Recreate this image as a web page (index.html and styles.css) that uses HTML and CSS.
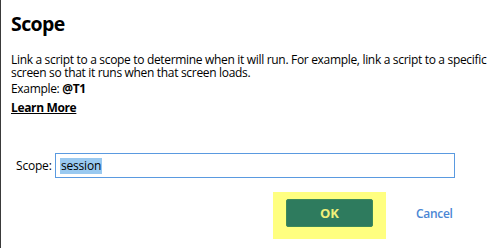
FILE: index.html
```html
<!DOCTYPE html>
<html>
<head>
<meta charset="utf-8">
<link rel="stylesheet" href="styles.css">
</head>
<body>
<div class="dialog">
  <h1 class="title">Scope</h1>
  <p class="desc">Link a script to a scope to determine when it will run. For example, link a script to a specific screen so that it runs when that screen loads.</p>
  <p class="example">Example: <b>@T1</b></p>
  <a class="learn" href="#">Learn More</a>
  <div class="field">
    <label class="label">Scope:</label>
    <div class="input"><span class="sel">session</span></div>
  </div>
  <div class="actions">
    <div class="hl"><button class="ok">OK</button></div>
    <a class="cancel" href="#">Cancel</a>
  </div>
</div>
</body>
</html>
```
FILE: styles.css
```css
html, body { margin: 0; padding: 0; background: #fff; }
body { font-family: "Open Sans", "Noto Sans", sans-serif; color: #000; }
.dialog {
  width: 499px; height: 248px; box-sizing: border-box;
  border-left: 1px solid #3a3a3a;
  padding: 10px 0 0 10px;
}
.title { margin: 0; font-size: 19.5px; font-weight: 700; line-height: 28px; letter-spacing: -0.6px; }
.desc { margin: 15px 0 0 0; font-size: 12px; line-height: 13px; letter-spacing: -0.32px; }
.example { margin: 3px 0 0 0; font-size: 12px; line-height: 13px; letter-spacing: -0.32px; }
.example b { font-weight: 700; }
.learn { display: inline-block; margin-top: 5px; font-size: 12px; font-weight: 700; color: #000; text-decoration: underline; line-height: 14px; letter-spacing: -0.35px; }
.field { display: flex; align-items: center; margin-top: 36px; padding-left: 5px; }
.label { font-size: 12px; width: 39px; letter-spacing: -0.2px; }
.input {
  width: 400px; height: 25px; box-sizing: border-box;
  border: 1px solid #5a9ae0; display: flex; align-items: center; padding-left: 4px;
}
.sel { background: #99c9f0; font-size: 12px; line-height: 16px; padding: 0 1px; letter-spacing: -0.2px; }
.actions { display: flex; align-items: center; margin-top: 14px; padding-left: 262px; }
.hl { background: #ffff80; padding: 7px 13px 12px 13px; }
.ok {
  width: 87px; height: 28px; background: #2e7b5e; border: 1px solid #3d8a5a; border-radius: 2px;
  color: #f0f07a; font-family: "Open Sans", sans-serif; font-weight: 700; font-size: 13px; display: block;
}
.cancel { margin-left: 30px; margin-top: -4px; color: #4a86d4; font-weight: 600; font-size: 12px; text-decoration: none; letter-spacing: -0.3px; }
```
